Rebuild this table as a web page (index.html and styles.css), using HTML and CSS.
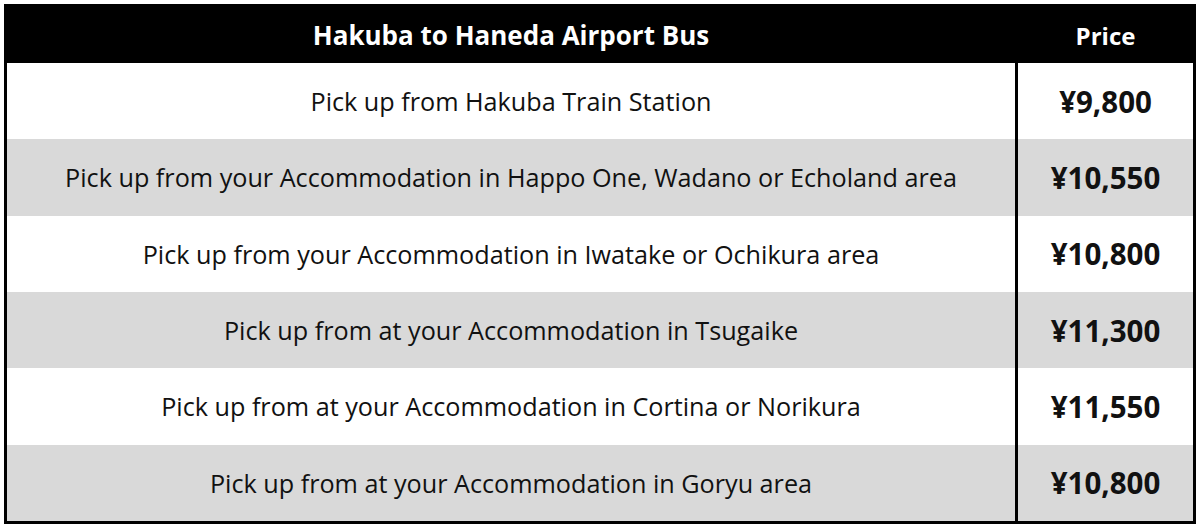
FILE: index.html
```html
<!DOCTYPE html>
<html lang="en">
<head>
<meta charset="utf-8">
<title>Hakuba to Haneda Airport Bus</title>
<link rel="stylesheet" href="styles.css">
</head>
<body>
<div class="wrap">
  <table class="fares">
    <thead>
      <tr>
        <th class="route">Hakuba to Haneda Airport Bus</th>
        <th class="price">Price</th>
      </tr>
    </thead>
    <tbody>
      <tr>
        <td class="route">Pick up from Hakuba Train Station</td>
        <td class="price">¥9,800</td>
      </tr>
      <tr class="alt">
        <td class="route">Pick up from your Accommodation in Happo One, Wadano or Echoland area</td>
        <td class="price">¥10,550</td>
      </tr>
      <tr>
        <td class="route">Pick up from your Accommodation in Iwatake or Ochikura area</td>
        <td class="price">¥10,800</td>
      </tr>
      <tr class="alt">
        <td class="route">Pick up from at your Accommodation in Tsugaike</td>
        <td class="price">¥11,300</td>
      </tr>
      <tr>
        <td class="route">Pick up from at your Accommodation in Cortina or Norikura</td>
        <td class="price">¥11,550</td>
      </tr>
      <tr class="alt">
        <td class="route">Pick up from at your Accommodation in Goryu area</td>
        <td class="price">¥10,800</td>
      </tr>
    </tbody>
  </table>
</div>
</body>
</html>
```
FILE: styles.css
```css
html, body {
  margin: 0;
  padding: 0;
  background: #ffffff;
}

.wrap {
  padding: 4px 0 0 4px;
}

.fares {
  width: 1192px;
  border-collapse: separate;
  border-spacing: 0;
  border: 3px solid #000;
  font-family: "Open Sans", "Liberation Sans", sans-serif;
  color: #111;
  table-layout: fixed;
}

.fares th {
  background: #000;
  color: #fff;
  font-weight: 700;
  font-size: 26px;
  height: 56px;
  padding: 0;
  text-align: center;
  vertical-align: middle;
}

.fares td {
  height: 76.33px;
  padding: 0;
  text-align: center;
  vertical-align: middle;
  background: #fff;
}

.fares td.route {
  font-size: 25.2px;
  font-weight: 400;
}

.fares .price {
  width: 175px;
  border-left: 3px solid #000;
}

.fares th.price {
  font-size: 24px;
}

.fares td.price {
  font-size: 29.5px;
  font-weight: 700;
}

.fares tr.alt td {
  background: #d9d9d9;
}
```
